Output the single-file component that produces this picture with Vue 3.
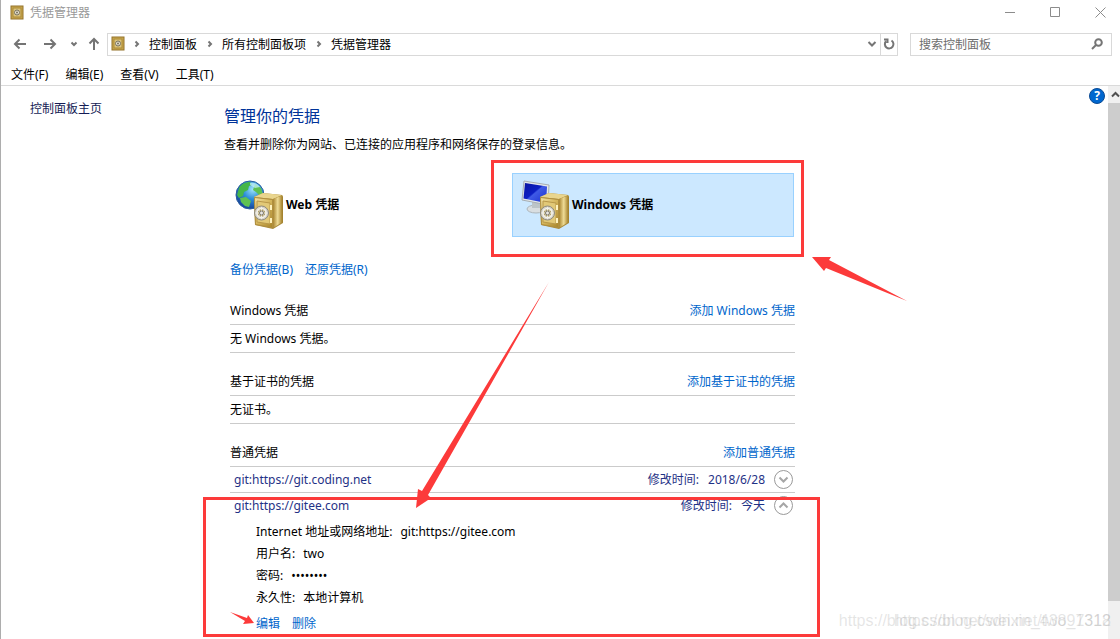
<template>
  <div class="window">
    <svg class="sprite" aria-hidden="true">
      <defs>
        <linearGradient id="gold" x1="0" y1="0" x2="1" y2="1">
          <stop offset="0" stop-color="#f3e3a4" />
          <stop offset="0.5" stop-color="#d5b65c" />
          <stop offset="1" stop-color="#a98528" />
        </linearGradient>
        <linearGradient id="goldSide" x1="0" y1="0" x2="1" y2="0">
          <stop offset="0" stop-color="#a8842f" />
          <stop offset="0.5" stop-color="#efdc96" />
          <stop offset="1" stop-color="#a07c25" />
        </linearGradient>
        <radialGradient id="ocean" cx="0.6" cy="0.3" r="0.75">
          <stop offset="0" stop-color="#9fe3fb" />
          <stop offset="0.45" stop-color="#2f8fd8" />
          <stop offset="1" stop-color="#123a94" />
        </radialGradient>
        <linearGradient id="screen" x1="0" y1="0" x2="1" y2="1">
          <stop offset="0" stop-color="#0a14a0" />
          <stop offset="0.45" stop-color="#0c1fc4" />
          <stop offset="0.5" stop-color="#3f5ae6" />
          <stop offset="1" stop-color="#1a2fd0" />
        </linearGradient>
      </defs>
      <symbol id="safe" viewBox="0 0 50 50">
        <path d="M19 17 28 13 47 15 48 17 48 43 38 49 20 45Z" fill="#a98a3a" />
        <path d="M19 17 28 13 47 15 38 19Z" fill="#e9d58e" />
        <path d="M38 19 47.500 15.500 47.500 42 38 48Z" fill="url(#goldSide)" />
        <path d="M19.500 17.500 37.500 19.500 37.500 47.500 20.500 44.500Z" fill="url(#gold)" stroke="#b08f40" />
        <path d="M22 21 35 23 35 44 22 42Z" fill="#e2c977" stroke="#b8984a" />
        <path d="M36 25v5M36 38v5" stroke="#fff2be" stroke-width="2" />
        <circle cx="26.500" cy="33" r="7" fill="#d7d4c8" stroke="#8d897c" />
        <circle cx="26.500" cy="33" r="4.500" fill="#b0a067" stroke="#f5f3ec" stroke-width="1.500" />
        <path d="M26.500 27v12M20.500 33h12M22.500 29l8 8M30.500 29l-8 8" stroke="#f1efe8" />
        <circle cx="26.500" cy="33" r="2" fill="#e8e7e2" stroke="#7d796e" />
      </symbol>
      <symbol id="safe-small" viewBox="0 0 14 16">
        <rect x="1" y="1" width="12" height="13" fill="#c9a84f" stroke="#94732a" />
        <rect x="3" y="3" width="8" height="9" fill="#dcc47b" stroke="#ab8937" />
        <circle cx="7" cy="7.500" r="2.500" fill="#e9e3cf" stroke="#76705d" />
        <circle cx="7" cy="7.500" r="1" fill="#77705a" />
      </symbol>
    </svg>

    <header class="titlebar">
      <svg class="app-icon" width="14" height="16"><use href="#safe-small" /></svg>
      <span class="title">凭据管理器</span>
      <div class="window-controls">
        <button type="button" aria-label="最小化">
          <svg width="11" height="11"><path d="M0 5.500h10" /></svg>
        </button>
        <button type="button" aria-label="最大化">
          <svg width="11" height="11"><path d="M.500.500h9v9H.500z" /></svg>
        </button>
        <button type="button" aria-label="关闭">
          <svg width="11" height="11"><path d="M.500.500l10 10M10.500.500l-10 10" /></svg>
        </button>
      </div>
    </header>

    <div class="toolbar">
      <nav class="nav-buttons">
        <button type="button" aria-label="后退">
          <svg width="14" height="12"><path d="M13 6H2M6.500 1.500 2 6l4.500 4.500" /></svg>
        </button>
        <button type="button" aria-label="前进">
          <svg width="14" height="12"><path d="M1 6h11M7.500 1.500 12 6l-4.500 4.500" /></svg>
        </button>
        <button type="button" class="recent" aria-label="最近浏览的位置">
          <svg width="8" height="6"><path d="M1.500 1.500 4 4l2.500-2.500" /></svg>
        </button>
        <button type="button" aria-label="上移">
          <svg width="12" height="14"><path d="M6 13V2M1.500 6.500 6 2l4.500 4.500" /></svg>
        </button>
      </nav>
      <div class="address">
        <svg class="address-icon" width="14" height="16"><use href="#safe-small" /></svg>
        <template v-for="crumb in crumbs" :key="crumb">
          <svg class="crumb-arrow" width="6" height="8"><path d="M1.500 1.500 4 4 1.500 6.500" /></svg>
          <a href="#" class="crumb">{{ crumb }}</a>
        </template>
        <button type="button" class="address-drop" aria-label="上一个位置">
          <svg width="10" height="8"><path d="M1.500 2 5 5.500 8.500 2" /></svg>
        </button>
        <button type="button" class="refresh" aria-label="刷新">
          <svg width="12" height="12"><path d="M8.500 2.500A4.300 4.300 0 1 1 3 3.200M1 1.500h3.500V5" /></svg>
        </button>
      </div>
      <div class="search">
        <input v-model="query" type="text" placeholder="搜索控制面板" aria-label="搜索控制面板" />
        <svg width="12" height="12"><circle cx="7.500" cy="4.500" r="3.300" /><path d="M5 7 1 11" /></svg>
      </div>
    </div>

    <nav class="menubar">
      <button v-for="menu in menus" :key="menu" type="button">{{ menu }}</button>
    </nav>

    <div class="body">
      <aside class="sidebar">
        <a href="#">控制面板主页</a>
      </aside>

      <main class="content">
        <h1>管理你的凭据</h1>
        <p class="intro">查看并删除你为网站、已连接的应用程序和网络保存的登录信息。</p>

        <div class="vaults">
          <div class="vault-cell">
            <button type="button" class="vault">
              <svg width="50" height="50">
                <circle cx="15" cy="15" r="14" fill="url(#ocean)" stroke="#2b5f9e" />
                <path d="M4 8C6 4 11 2 15 2l2 3-3 1-1 4-4 2-1 4-4 2-2-3z" fill="#45b649" />
                <path d="M5 18l6-1 5 4-2 6-4-1-4-4zM20 4l6 4 2 6-3 2-4-4-3-2z" fill="#5ec152" />
                <path d="M15 3c4-1 8 1 10 4l-5 1-5-3z" fill="#c8f3fb" opacity="0.7" />
                <use href="#safe" />
              </svg>
              Web 凭据
            </button>
          </div>
          <div class="vault-cell">
            <button type="button" class="vault selected">
              <svg width="50" height="50">
                <ellipse cx="15" cy="29" rx="9" ry="4" fill="#d9dee1" stroke="#adb5ba" />
                <path d="M11 21h8l1 7h-9z" fill="#bcc4c8" />
                <path d="M3 1 28 5 27 25 1 20Z" fill="#e4e8ea" stroke="#a7aeb3" />
                <path d="M4 3 26 6.500 25 23 2.500 18.500Z" fill="url(#screen)" />
                <use href="#safe" />
              </svg>
              Windows 凭据
            </button>
            <div class="mark mark-vault"></div>
          </div>
        </div>

        <div class="backup">
          <a href="#">备份凭据(B)</a>
          <a href="#">还原凭据(R)</a>
        </div>

        <section v-for="group in groups" :key="group.title" class="group">
          <div class="group-head">
            <h2>{{ group.title }}</h2>
            <a href="#">{{ group.add }}</a>
          </div>
          <p v-if="group.empty" class="empty">{{ group.empty }}</p>
          <div v-for="item in group.items" :key="item.name" class="entry">
            <div class="entry-head" :class="{ open: item.open }">
              <span class="entry-name">{{ item.name }}</span>
              <span>修改时间:</span>
              <span>{{ item.modified }}</span>
              <button
                type="button"
                class="toggle"
                :aria-expanded="item.open"
                :aria-label="item.name"
                @click="item.open = !item.open"
              >
                <svg width="19" height="19">
                  <circle cx="9.500" cy="9.500" r="9" />
                  <path :d="item.open ? 'M5.500 11.500l4-4 4 4' : 'M5.500 7.500l4 4 4-4'" />
                </svg>
              </button>
            </div>
            <template v-if="item.open">
              <dl class="details">
                <div v-for="field in item.fields" :key="field.label">
                  <dt>{{ field.label }}:</dt>
                  <dd>{{ field.value }}</dd>
                </div>
              </dl>
              <div class="entry-actions">
                <a href="#">编辑</a>
                <a href="#">删除</a>
              </div>
              <div class="mark mark-entry"></div>
            </template>
          </div>
        </section>
      </main>

      <button type="button" class="help" aria-label="帮助">?</button>
      <div class="scrollbar">
        <div class="scroll-up">
          <svg width="9" height="7"><path d="M1 5.500 4.500 2 8 5.500" /></svg>
        </div>
        <div class="scroll-thumb"></div>
      </div>
    </div>

    <svg class="arrows" aria-hidden="true">
      <path d="M549 282 428 495 431 498 416 508 418 489 422 491Z" />
      <path d="M907 301 829 260 831 257 812 257 824 271 826 268Z" />
      <path d="M230 612 247 618 248 615 254 623 243 624 245 621Z" />
    </svg>
    <div class="watermark">https://blog.csdn.net/weixin_43891318</div>
    <div class="watermark">https://blog.csdn.net/two_7312</div>
  </div>
</template>

<script setup>
import { ref } from 'vue'

const query = ref('')
const crumbs = ['控制面板', '所有控制面板项', '凭据管理器']
const menus = ['文件(F)', '编辑(E)', '查看(V)', '工具(T)']

const groups = ref([
  { title: 'Windows 凭据', add: '添加 Windows 凭据', empty: '无 Windows 凭据。', items: [] },
  { title: '基于证书的凭据', add: '添加基于证书的凭据', empty: '无证书。', items: [] },
  {
    title: '普通凭据',
    add: '添加普通凭据',
    empty: '',
    items: [
      { name: 'git:https://git.coding.net', modified: '2018/6/28', open: false, fields: [] },
      {
        name: 'git:https://gitee.com',
        modified: '今天',
        open: true,
        fields: [
          { label: 'Internet 地址或网络地址', value: 'git:https://gitee.com' },
          { label: '用户名', value: 'two' },
          { label: '密码', value: '••••••••' },
          { label: '永久性', value: '本地计算机' }
        ]
      }
    ]
  }
])
</script>

<style>
body {
  margin: 0;
}
</style>

<style scoped>
.window {
  position: relative;
  display: flex;
  flex-direction: column;
  box-sizing: border-box;
  height: 100vh;
  overflow: hidden;
  border-left: 1px solid #adadad;
  background: #fff;
  color: #000;
  font-family: "Noto Sans", "Noto Sans CJK SC", sans-serif;
  font-size: 12px;
  line-height: 20px;
}

.sprite {
  position: absolute;
  width: 0;
  height: 0;
}

svg {
  flex: none;
  fill: none;
}

button {
  display: flex;
  align-items: center;
  justify-content: center;
  padding: 0;
  border: none;
  background: none;
  color: inherit;
  font: inherit;
}

a {
  color: #0066cc;
  text-decoration: none;
}

.titlebar {
  display: flex;
  align-items: center;
  flex: none;
  box-sizing: border-box;
  height: 24px;
  padding: 2px 0 0 9px;
}

.title {
  margin-left: 6px;
  color: #999;
}

.window-controls {
  display: flex;
  margin: -2px -3px 0 auto;
}

.window-controls button {
  width: 45px;
  height: 24px;
}

.window-controls path {
  stroke: #8c8c8c;
}

.toolbar {
  display: flex;
  align-items: center;
  flex: none;
  height: 40px;
  padding-right: 8px;
}

.nav-buttons {
  display: flex;
  align-items: center;
  width: 106px;
  padding-left: 12px;
  box-sizing: border-box;
  gap: 16px;
}

.nav-buttons .recent {
  margin-right: -6px;
  margin-left: -3px;
}

.nav-buttons path {
  stroke: #747474;
  stroke-width: 2;
}

.address {
  display: flex;
  align-items: center;
  flex: 1;
  height: 21px;
  padding-left: 3px;
  border: 1px solid #d9d9d9;
}

.address-icon {
  margin-right: -1px;
}

.crumb-arrow {
  margin: 0 9px 0 10px;
}

.crumb-arrow path,
.address-drop path,
.refresh path {
  stroke: #757575;
  stroke-width: 2;
}

.crumb {
  padding-top: 1px;
  color: #000;
}

.address-drop {
  width: 17px;
  height: 21px;
  margin-left: auto;
}

.refresh {
  width: 17px;
  height: 21px;
  border-left: 1px solid #d9d9d9;
}

.search {
  display: flex;
  align-items: center;
  box-sizing: border-box;
  width: 202px;
  height: 23px;
  margin-left: 12px;
  padding: 0 8px;
  border: 1px solid #d9d9d9;
}

.search input {
  flex: 1;
  min-width: 0;
  padding: 2px 0 0;
  border: none;
  outline: none;
  background: none;
  font: inherit;
}

.search input::placeholder {
  color: #6d6d6d;
  opacity: 1;
}

.search svg {
  stroke: #757575;
  stroke-width: 2;
}

.menubar {
  display: flex;
  flex: none;
  gap: 17px;
  height: 21px;
  padding-left: 10px;
  border-bottom: 1px solid #dadada;
}

.body {
  display: flex;
  flex: 1;
  min-height: 0;
}

.sidebar {
  flex: none;
  box-sizing: border-box;
  width: 223px;
  padding: 13px 0 0 29px;
}

.sidebar a {
  color: #151c55;
}

.content {
  flex: 1;
  max-width: 571px;
  padding-top: 18px;
}

h1 {
  margin: 0 0 7px;
  color: #003399;
  font-size: 16px;
  font-weight: 400;
  line-height: 24px;
}

h2 {
  margin: 0;
  font-size: 12px;
  font-weight: 400;
}

.intro {
  margin: 0 0 18px;
}

.vaults {
  display: grid;
  grid-template-columns: 1fr 1fr;
  gap: 4px;
  padding: 0 1px 0 2px;
}

.vault-cell {
  position: relative;
}

.vault {
  justify-content: flex-start;
  gap: 1px;
  box-sizing: border-box;
  width: 100%;
  height: 64px;
  padding-left: 8px;
  border: 1px solid transparent;
  font-weight: 700;
}

.vault.selected {
  border-color: #99d1ff;
  background: #cce8ff;
}

.mark {
  position: absolute;
  border: 3px solid #fc3a3a;
  pointer-events: none;
}

.mark-vault {
  inset: -13px -10px -20px -21px;
}

.mark-entry {
  inset: 4px -25px -2px -27px;
}

.backup {
  display: flex;
  gap: 12px;
  margin: 23px 0 16px 6px;
}

.group {
  margin: 0 0 14px 6px;
}

.group-head {
  display: flex;
  align-items: center;
  justify-content: space-between;
  height: 26px;
  padding-top: 2px;
  border-bottom: 1px solid #cbcbcb;
}

.empty {
  margin: 0;
  border-bottom: 1px solid #cbcbcb;
  line-height: 27px;
}

.entry {
  position: relative;
}

.entry-head {
  display: flex;
  align-items: center;
  gap: 9px;
  height: 25px;
  padding: 0 2px 0 4px;
  border-bottom: 1px solid #cbcbcb;
  color: #1f3286;
}

.entry-head.open {
  border-bottom-color: transparent;
}

.entry-name {
  flex: 1;
}

.toggle circle {
  stroke: #999;
}

.toggle path {
  stroke: #a6a6a6;
  stroke-width: 2;
}

.details {
  margin: 2px 0 4px 26px;
  line-height: 22px;
}

.details div {
  display: flex;
  gap: 8px;
}

.details dd {
  margin: 0;
}

.entry-actions {
  display: flex;
  gap: 12px;
  margin-left: 26px;
  line-height: 22px;
}

.help {
  flex: none;
  width: 16px;
  height: 16px;
  margin: 2px 3px 0 auto;
  border: 1px solid #0a4a94;
  border-radius: 50%;
  background: #0067cf;
  color: #fff;
  font-size: 12px;
  font-weight: 700;
}

.scrollbar {
  display: flex;
  flex: none;
  flex-direction: column;
  width: 12px;
  background: #f0f0f0;
}

.scroll-up {
  display: flex;
  align-items: center;
  justify-content: center;
  height: 17px;
  padding-left: 3px;
}

.scroll-up path {
  stroke: #505050;
  stroke-width: 2;
}

.scroll-thumb {
  flex: none;
  height: 90%;
  background: #cdcdcd;
}

.arrows {
  position: absolute;
  top: 0;
  left: -1px;
  width: 100%;
  height: 100%;
  fill: #fc3a3a;
  pointer-events: none;
}

.watermark {
  position: absolute;
  right: 9px;
  bottom: 8px;
  color: rgba(150, 150, 150, 0.25);
  font-family: "Liberation Sans", Arial, sans-serif;
  font-size: 16px;
  pointer-events: none;
}
</style>
